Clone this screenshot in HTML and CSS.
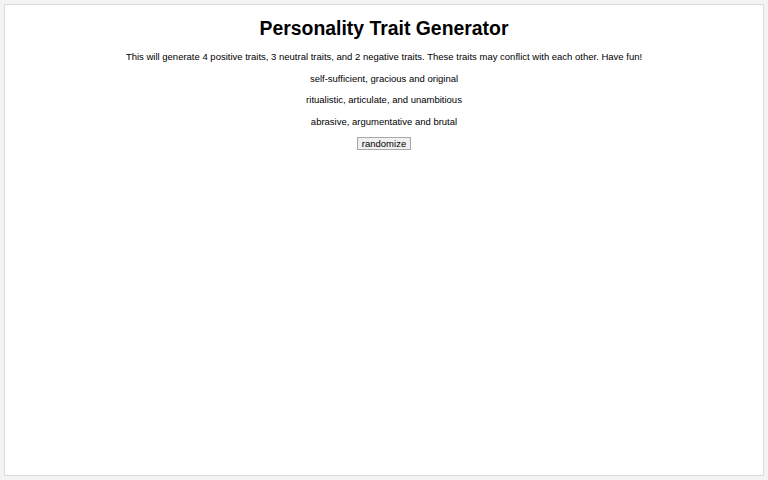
FILE: index.html
```html
<!DOCTYPE html>
<html>
<head>
<meta charset="utf-8">
<title>Personality Trait Generator</title>
<link rel="stylesheet" href="styles.css">
</head>
<body>
<main class="card">
  <h1 class="title">Personality Trait Generator</h1>
  <p class="line">This will generate 4 positive traits, 3 neutral traits, and 2 negative traits. These traits may conflict with each other. Have fun!</p>
  <p class="line">self-sufficient, gracious and original</p>
  <p class="line">ritualistic, articulate, and unambitious</p>
  <p class="line">abrasive, argumentative and brutal</p>
  <button class="btn" type="button">randomize</button>
</main>
</body>
</html>
```
FILE: styles.css
```css
html, body {
  margin: 0;
  height: 100%;
}
body {
  background: #f3f3f3;
  padding: 4px;
  box-sizing: border-box;
  font-family: "Liberation Sans", Arial, sans-serif;
  color: #000;
}
.card {
  background: #fff;
  border: 1px solid #dcdcdc;
  height: 100%;
  box-sizing: border-box;
  text-align: center;
  padding-top: 12px;
}
.title {
  font-size: 19.4px;
  font-weight: bold;
  margin: 0 0 11px;
}
.line {
  font-size: 9.5px;
  line-height: 11.5px;
  margin: 10px 0;
}
.btn {
  font-family: "Liberation Sans", Arial, sans-serif;
  font-size: 9.5px;
  line-height: 11px;
  padding: 0 4px;
  background: #f0f0f0;
  border: 1px solid #a9a9a9;
  border-radius: 0;
  color: #000;
  margin-top: 0;
  vertical-align: top;
}
```
